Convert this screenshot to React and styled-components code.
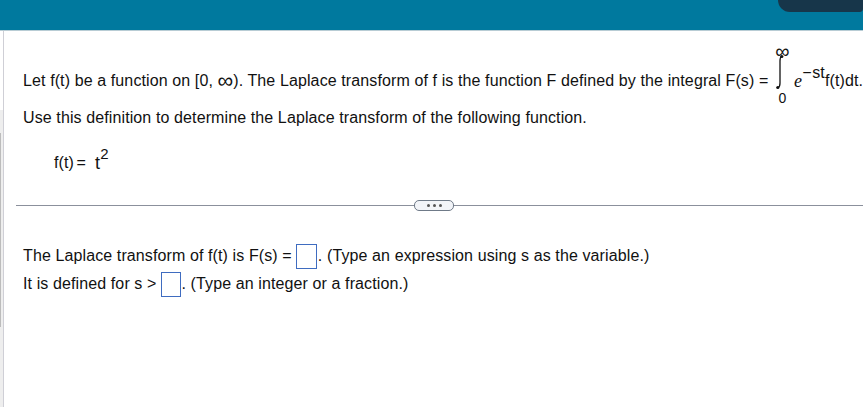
import React from 'react';
import styled, { createGlobalStyle } from 'styled-components';

const GlobalStyle = createGlobalStyle`
  html, body {
    margin: 0;
    padding: 0;
    background: #fff;
    overflow: hidden;
  }
  body {
    font-family: "Liberation Sans", Arial, sans-serif;
    color: #111;
  }
`;

const Page = styled.div`
  width: 863px;
  height: 407px;
  display: flex;
  flex-direction: column;
  overflow: hidden;
`;

const TopBar = styled.header`
  height: 31px;
  flex: none;
  display: flex;
  justify-content: flex-end;
  background: #00799e;
  border-bottom: 1px solid #b8ccd4;
  box-sizing: border-box;
`;

const AccountTab = styled.div`
  width: 85px;
  height: 12px;
  background: #17364a;
  border-bottom-left-radius: 14px;
  border-bottom-right-radius: 4px;
`;

const Body = styled.div`
  flex: 1;
  display: flex;
  min-height: 0;
`;

/* scrollbar strip: track from y=110, thumb is the darker 1px edge */
const Rail = styled.div`
  width: 4px;
  flex: none;
  box-sizing: border-box;
  border-right: 1px solid #cfcfd6;
  background:
    linear-gradient(#bcbcbc, #bcbcbc) 0 102px / 1px 194px no-repeat,
    linear-gradient(#fff 0, #fff 79px, #eeeeee 79px);
`;

const Main = styled.main`
  flex: 1;
  min-width: 0;
  padding-top: 41px;
`;

const Question = styled.section`
  padding-left: 19px;
  font-size: 16px;
  line-height: 18px;
  letter-spacing: 0.11px;
`;

const Line = styled.div`
  display: flex;
  align-items: center;
  white-space: pre;
  height: ${p => p.$height || 18}px;
  margin-bottom: ${p => p.$gap || 0}px;
  padding-left: ${p => p.$indent || 0}px;
  word-spacing: ${p => p.$wordGap || 0}px;
`;

const Infinity = styled.span`
  font-size: 22px;
  line-height: 0;
  letter-spacing: 0;
`;

const Integral = styled.span`
  position: relative;
  display: inline-block;
  width: 14px;
  height: 50px;
  margin: 0 1px 0 5px;
`;

const Limit = styled.span`
  position: absolute;
  left: 0;
  width: 18px;
  text-align: center;
  font-size: ${p => p.$size}px;
  line-height: 14px;
  top: ${p => p.$top}px;
`;

const ExpBase = styled.span`
  font-family: "Liberation Serif", serif;
  font-style: italic;
  font-size: 18px;
  margin-left: 6px;
`;

const Sup = styled.span`
  font-size: ${p => p.$size || 16}px;
  word-spacing: ${p => p.$wordGap || 0}px;
  position: relative;
  top: -${p => p.$raise || 6}px;
`;

const Big = styled.span`
  font-size: 18px;
  margin-left: ${p => p.$left || 0}px;
`;

const Divider = styled.div`
  display: flex;
  align-items: center;
  margin: 25px 0 0 12px;
  &::before, &::after {
    content: "";
    height: 1px;
    background: #8b909c;
  }
  &::before { width: 398px; }
  &::after { flex: 1; }
`;

const Dots = styled.div`
  flex: none;
  width: 38px;
  height: 9px;
  display: flex;
  align-items: center;
  justify-content: center;
  gap: 3px;
  border: 1px solid #6f7a88;
  border-radius: 5px;
  background: #f2f4f8;
  box-sizing: content-box;
  span {
    width: 3px;
    height: 3px;
    background: #555;
    border-radius: 50%;
  }
`;

const Answers = styled.section`
  padding: 31px 0 0 19px;
  font-size: 16px;
  letter-spacing: 0.11px;
`;

const AnswerBox = styled.span`
  display: inline-block;
  flex: none;
  box-sizing: border-box;
  width: ${p => p.$width}px;
  height: 25px;
  margin: 0 1px 0 4px;
  border: 1px solid #3f6cc0;
  background: #fff;
`;

const IntegralSign = () => (
  <svg width="14" height="36" viewBox="0 0 14 36" style={{ position: 'absolute', left: 0, top: -2 }}>
    <path d="M8.5 2.5 C7.2 3 7 5 7 7 L7 29 C7 31.5 6.5 33 5 33.5" fill="none" stroke="#111" strokeWidth="1.3" />
    <circle cx="8.8" cy="2.5" r="1.6" fill="#111" />
    <circle cx="4.8" cy="33.5" r="1.6" fill="#111" />
  </svg>
);

export default function App() {
  return (
    <>
      <GlobalStyle />
      <Page>
        <TopBar>
          <AccountTab />
        </TopBar>
        <Body>
          <Rail />
          <Main>
            <Question>
              <Line $height={18} $gap={19}>
                Let f(t) be a function on [0, <Infinity>∞</Infinity>). The Laplace transform of f is the function F defined by the integral F(s) =
                <Integral>
                  <Limit $size={20} $top={-12}>∞</Limit>
                  <IntegralSign />
                  <Limit $size={14} $top={35}>0</Limit>
                </Integral>
                <ExpBase>e</ExpBase>
                <Sup $wordGap={-4} $raise={8}>− st</Sup>
                f(t)dt.
              </Line>
              <Line $height={18} $gap={24}>Use this definition to determine the Laplace transform of the following function.</Line>
              <Line $indent={31} $height={24} $wordGap={-2}>
                f(t) =<Big $left={9}>t</Big><Sup $size={15} $raise={9}>2</Sup>
              </Line>
            </Question>
            <Divider>
              <Dots><span /><span /><span /></Dots>
            </Divider>
            <Answers>
              <Line $height={28}>
                The Laplace transform of f(t) is F(s) =<AnswerBox $width={21} />. (Type an expression using s as the variable.)
              </Line>
              <Line $height={28}>
                It is defined for s &gt;<AnswerBox $width={20} />. (Type an integer or a fraction.)
              </Line>
            </Answers>
          </Main>
        </Body>
      </Page>
    </>
  );
}
